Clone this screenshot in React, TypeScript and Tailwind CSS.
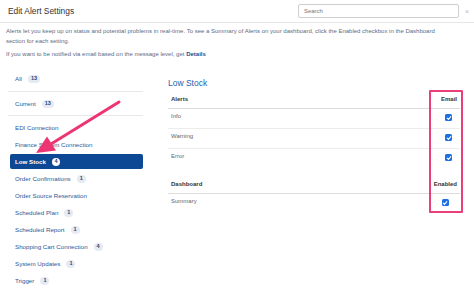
import React from 'react';

type Item = { label: string; count?: number };

const TOP: Item[] = [
  { label: 'All', count: 13 },
  { label: 'Current', count: 13 },
];

const ITEMS: Item[] = [
  { label: 'EDI Connection' },
  { label: 'Finance System Connection' },
  { label: 'Low Stock', count: 4 },
  { label: 'Order Confirmations', count: 1 },
  { label: 'Order Source Reservation' },
  { label: 'Scheduled Plan', count: 1 },
  { label: 'Scheduled Report', count: 1 },
  { label: 'Shopping Cart Connection', count: 4 },
  { label: 'System Updates', count: 1 },
  { label: 'Trigger', count: 1 },
];

function Badge({ n }: { n: number }) {
  return (
    <span className="ml-[6px] inline-flex h-[8px] items-center rounded-full bg-[#e6ebf3] px-[3px] text-[5.5px] font-bold leading-none text-[#27487a]">
      {n}
    </span>
  );
}

function Check() {
  return (
    <span className="flex h-[7px] w-[7px] items-center justify-center rounded-[1.5px] bg-[#1c6fe3]">
      <svg viewBox="0 0 10 10" className="h-[6px] w-[6px]">
        <path d="M2 5.3 L4.2 7.4 L8 2.8" fill="none" stroke="#fff" strokeWidth="1.8" strokeLinecap="round" strokeLinejoin="round" />
      </svg>
    </span>
  );
}

function Section({ title, col, rows }: { title: string; col: string; rows: string[] }) {
  return (
    <div className="grid grid-cols-[1fr_auto]">
      <div className="flex h-[19px] items-center border-b border-[#dcdcdc] pl-[3px] text-[6px] font-bold text-[#333]">{title}</div>
      <div className="flex h-[19px] items-center border-b border-[#dcdcdc] pr-[3px] text-[6px] font-bold text-[#333]">{col}</div>
      {rows.map((r, i) => {
        const last = i === rows.length - 1;
        return (
          <React.Fragment key={r}>
            <div className={`h-[20px] pl-[3px] pt-[3px] text-[6px] leading-[8px] text-[#666] ${last ? '' : 'border-b border-[#ececec]'}`}>{r}</div>
            <div className={`flex h-[20px] justify-center pr-[3px] pt-[5px] ${last ? '' : 'border-b border-[#ececec]'}`}>
              <Check />
            </div>
          </React.Fragment>
        );
      })}
    </div>
  );
}

export default function App() {
  return (
    <div className="relative h-[289px] w-[474px] overflow-hidden bg-white font-['Liberation_Sans',Arial,sans-serif]">
      <div className="flex h-[23px] items-center justify-between border-b border-[#e6e6e6] pl-[8px] pr-[5px]">
        <h1 className="text-[8.4px] text-[#333]">Edit Alert Settings</h1>
        <div className="flex items-center gap-[6px]">
          <div className="flex h-[14px] w-[161px] items-center rounded-[2px] border border-[#cfcfcf] px-[5px] text-[6px] text-[#777]">
            Search
          </div>
          <span className="text-[7px] leading-none text-[#bbb]">×</span>
        </div>
      </div>

      <div className="px-[6px] pt-[3px] text-[6px] leading-[10px] text-[#5c6c86]">
        <p className="whitespace-nowrap">
          Alerts let you keep up on status and potential problems in real-time. To see a Summary of Alerts on your dashboard, click the Enabled checkbox in the Dashboard
        </p>
        <p className="whitespace-nowrap">section for each setting.</p>
        <p className="mt-[3px] whitespace-nowrap">
          If you want to be notified via email based on the message level, get{' '}
          <a className="font-bold text-[#1d4f8e]">Details</a>
        </p>
      </div>

      <div className="mt-[8px] flex">
        <aside className="ml-[8px] w-[135px] shrink-0 text-[6.2px] text-[#2b5896]">
          {TOP.map((t, i) => (
            <div key={t.label} className={`flex items-center border-b border-[#e8e8e8] pl-[7px] ${i === 0 ? 'h-[25px]' : 'h-[24px]'}`}>
              {t.label}
              {t.count !== undefined && <Badge n={t.count} />}
            </div>
          ))}
          <div className="pt-[3px]">
            {ITEMS.map((it) =>
              it.label === 'Low Stock' ? (
                <div key={it.label} className="flex h-[17px] items-center py-[1px] pl-[2px]">
                  <div className="flex h-[15px] flex-1 items-center rounded-[2px] bg-[#0c4893] pl-[5px] font-bold text-white">
                    {it.label}
                    <span className="ml-[6px] flex h-[8px] w-[8px] items-center justify-center rounded-full bg-white text-[5.5px] font-bold leading-none text-[#0c4893]">
                      {it.count}
                    </span>
                  </div>
                </div>
              ) : (
                <div key={it.label} className="flex h-[17px] items-center pl-[7px]">
                  {it.label}
                  {it.count !== undefined && <Badge n={it.count} />}
                </div>
              )
            )}
          </div>
        </aside>

        <main className="ml-[25px] mr-[14px] flex-1 pt-[10px]">
          <h2 className="h-[12px] text-[8.5px] leading-[12px] text-[#2363ad]">Low Stock</h2>
          <div className="mt-[1px]">
            <Section title="Alerts" col="Email" rows={['Info', 'Warning', 'Error']} />
          </div>
          <div className="mt-[6px]">
            <Section title="Dashboard" col="Enabled" rows={['Summary']} />
          </div>
        </main>
      </div>

      <div className="pointer-events-none absolute left-[429px] top-[90px] h-[123px] w-[34px] rounded-[1px] border-2 border-[#ea3f7a]" />

      <svg className="pointer-events-none absolute left-0 top-0" width="474" height="289">
        <line x1="119" y1="102" x2="51" y2="144" stroke="#ee3574" strokeWidth="3" strokeLinecap="round" />
        <polygon points="36,153 56,150.5 47,136.5" fill="#ee3574" />
      </svg>
    </div>
  );
}
